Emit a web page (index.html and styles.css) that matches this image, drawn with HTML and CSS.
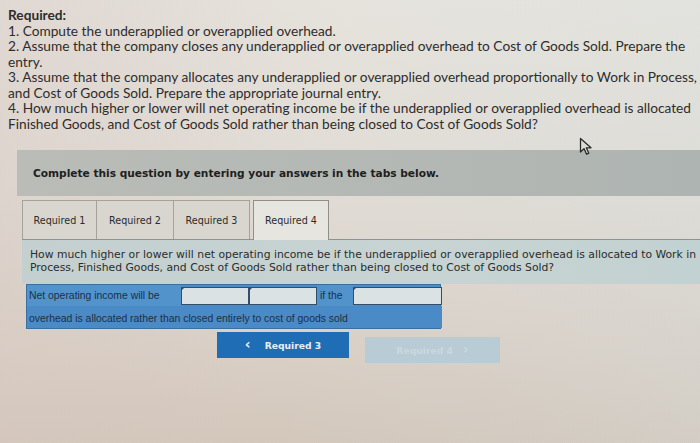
FILE: index.html
```html
<!DOCTYPE html>
<html>
<head>
<meta charset="utf-8">
<link rel="stylesheet" href="styles.css">
</head>
<body>
<div class="page">
  <div class="req">
    <div class="line bold">Required:</div>
    <div class="line">1. Compute the underapplied or overapplied overhead.</div>
    <div class="line">2. Assume that the company closes any underapplied or overapplied overhead to Cost of Goods Sold. Prepare the</div>
    <div class="line">entry.</div>
    <div class="line">3. Assume that the company allocates any underapplied or overapplied overhead proportionally to Work in Process,</div>
    <div class="line">and Cost of Goods Sold. Prepare the appropriate journal entry.</div>
    <div class="line">4. How much higher or lower will net operating income be if the underapplied or overapplied overhead is allocated</div>
    <div class="line">Finished Goods, and Cost of Goods Sold rather than being closed to Cost of Goods Sold?</div>
  </div>

  <div class="card">
    <div class="head">Complete this question by entering your answers in the tabs below.</div>
    <div class="tabs">
      <div class="tab t1">Required 1</div>
      <div class="tab t2">Required 2</div>
      <div class="tab t3">Required 3</div>
      <div class="tab t4 active">Required 4</div>
    </div>
    <div class="panel">
      <div class="q">How much higher or lower will net operating income be if the underapplied or overapplied overhead is allocated to Work in</div>
      <div class="q">Process, Finished Goods, and Cost of Goods Sold rather than being closed to Cost of Goods Sold?</div>
    </div>
    <div class="ans">
      <div class="cell lbl">Net operating income will be</div>
      <div class="cell inp"></div>
      <div class="cell inp"></div>
      <div class="cell lbl ifthe">if the</div>
      <div class="cell inp"></div>
      <div class="cell lbl wide">overhead is allocated rather than closed entirely to cost of goods sold</div>
    </div>
    <div class="btns">
      <div class="btn prev"><span class="chev">&lsaquo;</span>Required 3</div>
      <div class="btn next">Required 4<span class="chev r">&rsaquo;</span></div>
    </div>
  </div>

  <svg class="cursor" width="14" height="19" viewBox="0 0 14 19">
    <path d="M1.5 1.5 L1.5 15 L5 11.6 L7.6 17.2 L9.8 16.2 L7.3 10.8 L12 10.8 Z" fill="#dcdcd6" stroke="#2b2b2b" stroke-width="1.3" stroke-linejoin="round"/>
  </svg>
</div>
</body>
</html>
```

FILE: styles.css
```css
html, body {
  margin: 0;
  padding: 0;
}

.page {
  position: relative;
  width: 700px;
  height: 443px;
  overflow: hidden;
  background:
    linear-gradient(100deg, rgba(214, 196, 190, 0.35) 0%, rgba(230, 232, 228, 0) 45%, rgba(210, 224, 226, 0.25) 100%),
    linear-gradient(180deg, #e6e3dd 0%, #e0dbd4 45%, #d9cfc5 80%, #d3c7bb 100%);
  color: #2b2a29;
}

.req {
  padding: 7px 0 0 8px;
  font-family: Lato, "Open Sans", sans-serif;
  font-size: 13.7px;
  line-height: 15.5px;
  color: #2e2d2c;
}

.line {
  white-space: nowrap;
}

.bold {
  font-weight: bold;
}

.card {
  margin: 19px 0 0 17px;
}

.head {
  height: 46px;
  display: flex;
  align-items: center;
  padding-left: 16px;
  background: linear-gradient(90deg, #b9bcb7 0%, #b3b8b4 60%, #aeb4b1 100%);
  font-family: "DejaVu Sans", Verdana, sans-serif;
  font-weight: bold;
  font-size: 10.6px;
  color: #1f2020;
  white-space: nowrap;
}

.tabs {
  display: flex;
  margin: 3px 0 0 5px;
  height: 40px;
  align-items: flex-end;
}

.tab {
  box-sizing: border-box;
  height: 39px;
  display: flex;
  align-items: center;
  justify-content: center;
  border: 1px solid #a3a29c;
  border-bottom: none;
  background: #d9d6cf;
  font-family: "DejaVu Sans", Verdana, sans-serif;
  font-size: 9.6px;
  color: #2a2b2b;
  white-space: nowrap;
}

.t1 { width: 75px; }
.t2 { width: 77px; border-left: none; }
.t3 { width: 76px; border-left: none; }
.t4 { width: 76px; margin-left: 3px; }

.tab.active {
  height: 40px;
  background: #e6e5e0;
  border-color: #8e8f8b;
  position: relative;
  z-index: 1;
  margin-bottom: -1px;
}

.panel {
  margin-left: 5px;
  box-sizing: border-box;
  height: 45px;
  padding: 9px 0 0 8px;
  border-top: 1px solid #8d9392;
  background: linear-gradient(90deg, #c3d0cf 0%, #c7d4d3 60%, #c2d1d1 100%);
  font-family: "DejaVu Sans", Verdana, sans-serif;
  font-size: 10.8px;
  line-height: 12.5px;
  color: #2a2d2e;
}

.q {
  white-space: nowrap;
}

.ans {
  display: grid;
  grid-template-columns: 154px 68px 68px 36px 89px;
  grid-template-rows: 21px 22px;
  width: 415px;
  margin: 0 0 0 9px;
  background: #4d8cc6;
  border: 1px solid #3a6f9e;
  box-sizing: border-box;
  font-family: "Liberation Sans", Arial, sans-serif;
  font-size: 10.4px;
  color: #1a3049;
}

.cell {
  box-sizing: border-box;
  display: flex;
  align-items: center;
  white-space: nowrap;
}

.lbl {
  padding-left: 2px;
  background: #5293cc;
}

.ifthe {
  padding-left: 3px;
}

.inp {
  position: relative;
  background: #dbe2e4;
  border: 1.5px solid #2f4f6c;
  margin: 2px 0 1px 0;
}

.inp::before {
  content: "";
  position: absolute;
  left: -1px;
  top: -1px;
  border-left: 4px solid #2f4f6c;
  border-bottom: 4px solid transparent;
}

.wide {
  grid-column: 1 / span 5;
  background: #4a8ac6;
  padding-left: 2px;
  padding-top: 2px;
}

.btns {
  display: flex;
  align-items: flex-start;
  margin: 3px 0 0 200px;
}

.btn {
  box-sizing: border-box;
  height: 26px;
  display: flex;
  align-items: center;
  justify-content: center;
  font-family: "DejaVu Sans", Verdana, sans-serif;
  font-weight: bold;
  font-size: 9.2px;
  white-space: nowrap;
}

.prev {
  width: 132px;
  background: #1f6db4;
  color: #e8eef4;
}

.next {
  width: 135px;
  margin: 5px 0 0 16px;
  background: #b9ccd6;
  color: #c9d8df;
}

.chev {
  font-size: 14px;
  margin-right: 14px;
  line-height: 1;
  position: relative;
  top: -1px;
}

.chev.r {
  margin: 0 0 0 10px;
}

.cursor {
  position: absolute;
  left: 579px;
  top: 137px;
}
```
